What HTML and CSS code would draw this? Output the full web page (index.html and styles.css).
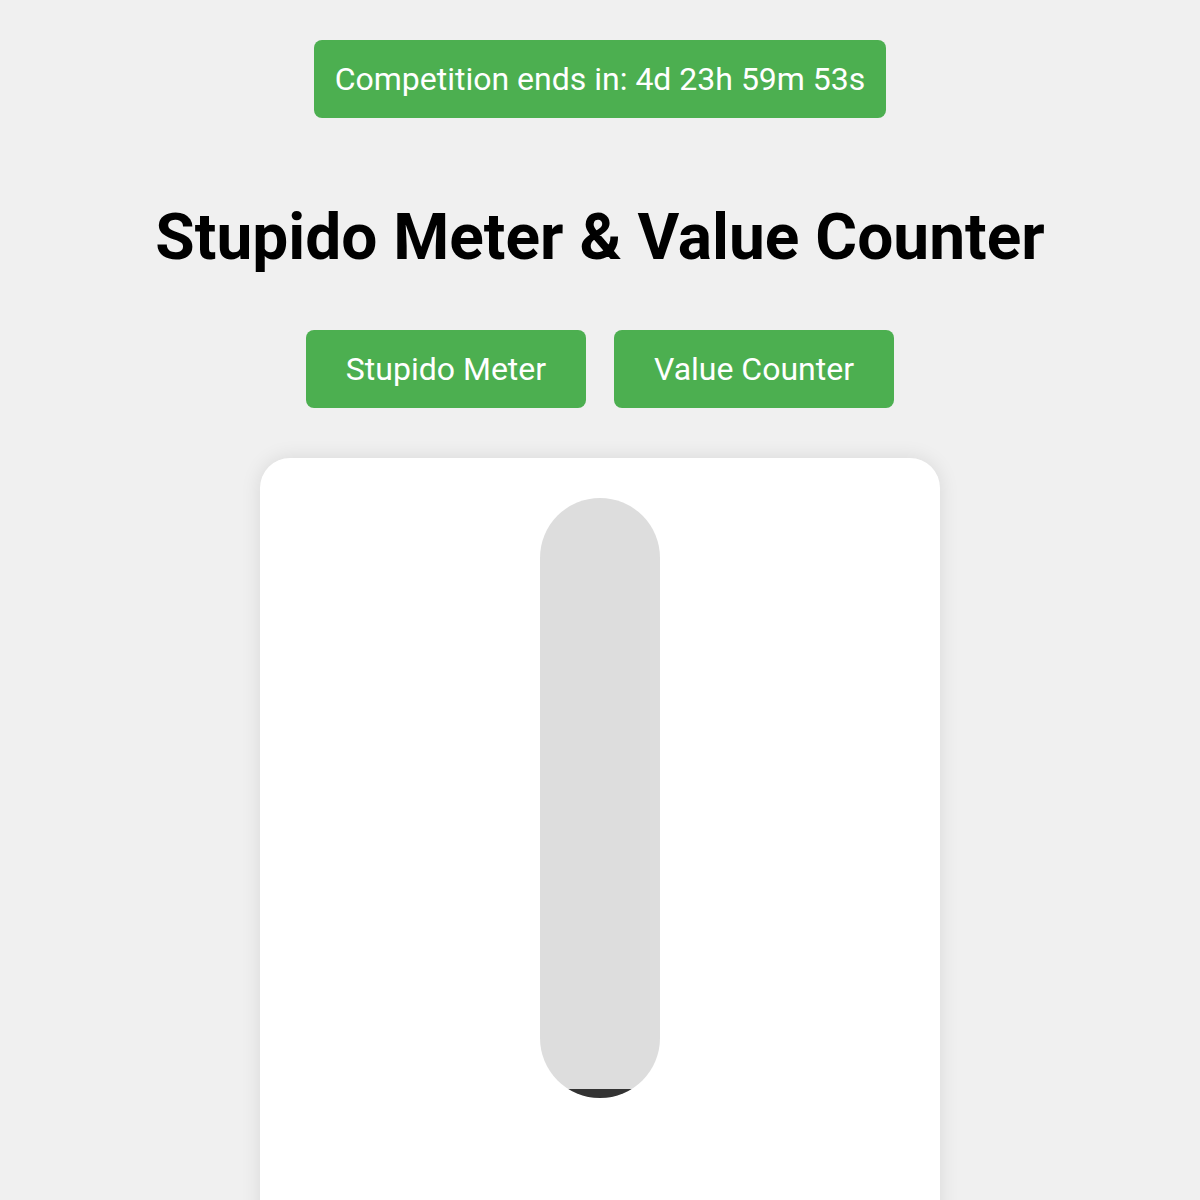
FILE: index.html
```html
<!DOCTYPE html>
<html lang="en">
<head>
    <meta charset="UTF-8">
    <meta name="viewport" content="width=device-width, initial-scale=1.0">
    <title>Stupido Meter &amp; Value Counter</title>
    <link rel="stylesheet" href="styles.css">
</head>
<body>
    <div class="countdown">Competition ends in: 4d 23h 59m 53s</div>
    <h1>Stupido Meter &amp; Value Counter</h1>
    <div class="tabs">
        <button class="tab">Stupido Meter</button>
        <button class="tab">Value Counter</button>
    </div>
    <main class="card">
        <div class="meter">
            <div class="meter-fill" style="height: 1.5%"></div>
        </div>
    </main>
</body>
</html>
```

FILE: styles.css
```css
body {
    margin: 0;
    padding: 40px 0 0;
    font-family: Roboto, Arial, sans-serif;
    background-color: #f0f0f0;
    color: #000;
    text-align: center;
}
.countdown {
    display: inline-block;
    background-color: #4caf50;
    color: white;
    font-size: 32px;
    padding: 20px 21px;
    border-radius: 8px;
}
h1 {
    font-size: 64px;
    font-weight: 700;
    margin: 82px 0 55px;
}
.tabs {
    display: flex;
    justify-content: center;
    gap: 28px;
}
.tab {
    width: 280px;
    height: 78px;
    border: none;
    border-radius: 8px;
    background-color: #4caf50;
    color: white;
    font-family: Roboto, Arial, sans-serif;
    font-size: 32px;
}
.card {
    width: 680px;
    height: 800px;
    box-sizing: border-box;
    margin: 50px auto 0;
    padding: 40px 0;
    background: white;
    border-radius: 30px;
    box-shadow: 0 0 20px rgba(0, 0, 0, 0.1);
}
.meter {
    position: relative;
    width: 120px;
    height: 600px;
    margin: 0 auto;
    background-color: #ddd;
    border-radius: 60px;
    overflow: hidden;
}
.meter-fill {
    position: absolute;
    left: 0;
    right: 0;
    bottom: 0;
    background-color: #333;
}
```
